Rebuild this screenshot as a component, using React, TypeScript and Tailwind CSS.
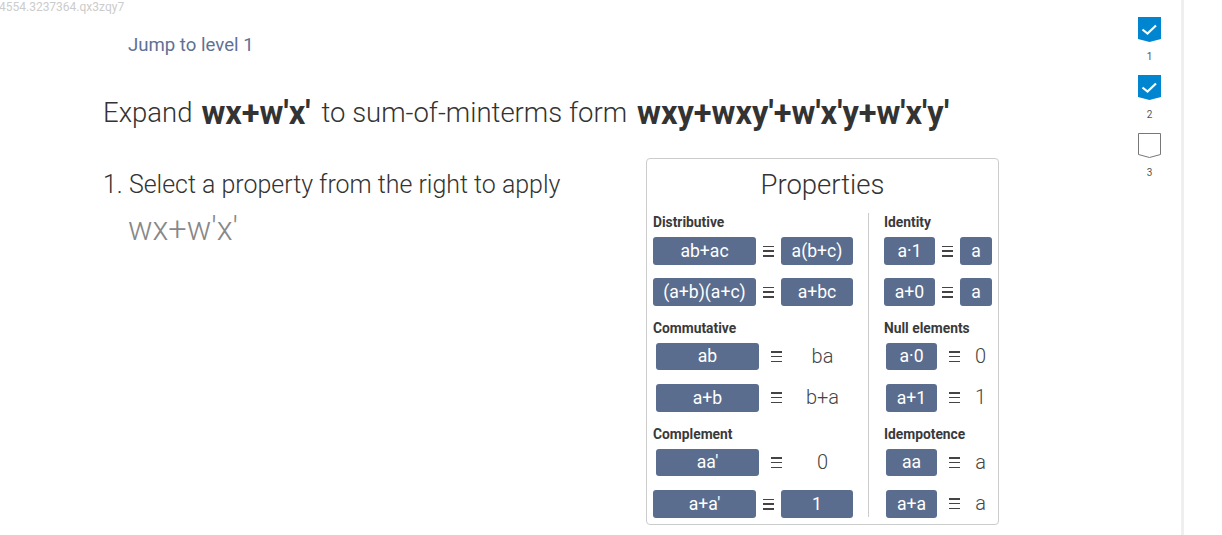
const BTN = "flex items-center justify-center rounded-[3px] bg-[#5a6d8e] text-[17.6px] text-white";

// Full row: both sides are buttons
function ButtonRow({ a, b, wide }: { a: string; b: string; wide: boolean }) {
  return (
    <div className="flex h-7 items-center">
      <div className={`${BTN} h-7 ${wide ? "w-[103px]" : "w-[51px]"}`}>{a}</div>
      <Equiv className="mx-[7px]" />
      <div className={`${BTN} h-7 ${wide ? "w-[72px]" : "w-[32px]"}`}>{b}</div>
    </div>
  );
}

function TextRow({ a, b, wide, short }: { a: string; b: string; wide: boolean; short?: boolean }) {
  return (
    <div className={`flex h-7 items-start ${wide ? "pl-[3px] pr-[2px]" : "pl-[2px] pr-[3px]"}`}>
      <div className={`${BTN} ${short ? "h-[27px]" : "h-7"} ${wide ? "w-[103px]" : "w-[51px]"}`}>{a}</div>
      <Equiv className="mx-3 mt-2" />
      <div className="flex-1 text-center text-[20px] font-light leading-[27px] text-[#444]">{b}</div>
    </div>
  );
}

function Equiv({ className }: { className: string }) {
  return (
    <div className={`flex h-[11px] w-[11px] shrink-0 flex-col justify-between ${className}`}>
      <span className="h-[1.5px] bg-[#444]" />
      <span className="h-[1.5px] bg-[#444]" />
      <span className="h-[1.5px] bg-[#444]" />
    </div>
  );
}

function Section({ title, first, children }: { title: string; first?: boolean; children: React.ReactNode }) {
  return (
    <div className={first ? "" : "mt-[13px]"}>
      <div className="mb-[6px] h-[18px] text-[13.8px] font-bold leading-[18px] text-[#3a3a3a]">{title}</div>
      <div className="flex flex-col gap-[13px]">{children}</div>
    </div>
  );
}

function PropertiesCard() {
  return (
    <div className="h-[367px] w-[353px] rounded-[4px] border border-[#ccc] px-[6px]">
      <div className="h-[54px] pt-[7px] text-center text-[27.5px] font-light leading-[38px] text-[#333]">Properties</div>
      <div className="flex h-[304px]">
        <div className="w-[216px] border-r border-[#ccc] pr-[15px]">
          <Section title="Distributive" first>
            <ButtonRow wide a="ab+ac" b="a(b+c)" />
            <ButtonRow wide a="(a+b)(a+c)" b="a+bc" />
          </Section>
          <Section title="Commutative">
            <TextRow wide short a="ab" b="ba" />
            <TextRow wide a="a+b" b="b+a" />
          </Section>
          <Section title="Complement">
            <TextRow wide short a="aa'" b="0" />
            <ButtonRow wide a="a+a'" b="1" />
          </Section>
        </div>
        <div className="w-[123px] pl-[15px]">
          <Section title="Identity" first>
            <ButtonRow wide={false} a="a·1" b="a" />
            <ButtonRow wide={false} a="a+0" b="a" />
          </Section>
          <Section title="Null elements">
            <TextRow wide={false} short a="a·0" b="0" />
            <TextRow wide={false} a="a+1" b="1" />
          </Section>
          <Section title="Idempotence">
            <TextRow wide={false} short a="aa" b="a" />
            <TextRow wide={false} a="a+a" b="a" />
          </Section>
        </div>
      </div>
    </div>
  );
}

function LevelBadge({ n, done }: { n: number; done: boolean }) {
  return (
    <div className="flex h-[58px] flex-col items-center">
      <svg width="23" height="25" viewBox="0 0 23 25">
        {done ? (
          <>
            <path d="M0 0H23V22L11.5 25L0 22Z" fill="#0085d1" />
            <path d="M4.5 12.5L9.5 16.5L18 8.5" fill="none" stroke="#fff" strokeWidth="2.2" />
          </>
        ) : (
          <path d="M0.5 0.5H22.5V21.5L11.5 24.5L0.5 21.5Z" fill="#fff" stroke="#777" />
        )}
      </svg>
      <div className="mt-[9px] text-[10px] leading-[12px] text-[#555]">{n}</div>
    </div>
  );
}

export default function App() {
  return (
    <div className="flex h-[535px] w-[1222px] overflow-hidden bg-white font-['Roboto',sans-serif]">
      <div className="w-[1181px] shrink-0">
        <div className="flex">
          <div className="min-w-0 flex-1">
            <div className="-ml-[1px] h-[14px] text-[12px] leading-[14px] text-[#ccc]">
              4554.3237364.qx3zqy7
            </div>
            <div className="ml-[128px] mt-[20px] text-[18.6px] leading-[22px] text-[#5f7196]">
              Jump to level 1
            </div>
            <div className="ml-[103px] mt-[36px] flex h-[42px] items-center whitespace-nowrap text-[27.5px] font-light text-[#333]">
              Expand
              <b className="ml-[9px] mr-[11px] text-[32.5px] font-bold">wx+w'x'</b>
              to sum-of-minterms form
              <b className="ml-[10px] text-[32.5px] font-bold">wxy+wxy'+w'x'y+w'x'y'</b>
            </div>
            <div className="mt-[24px] flex">
              <div className="ml-[103px] w-[543px]">
                <div className="mt-[10px] text-[24.95px] font-light leading-[34px] text-[#333]">1. Select a property from the right to apply</div>
                <div className="ml-[25px] mt-[3px] text-[32.5px] font-light leading-[48px] text-[#888]">wx+w'x'</div>
              </div>
              <PropertiesCard />
            </div>
          </div>
          <div className="flex w-[46px] shrink-0 flex-col items-center pr-[17px] pt-[17px]">
            <LevelBadge n={1} done />
            <LevelBadge n={2} done />
            <LevelBadge n={3} done={false} />
          </div>
        </div>
      </div>
      <div className="h-full w-[3px] bg-[#efefef]" />
    </div>
  );
}
